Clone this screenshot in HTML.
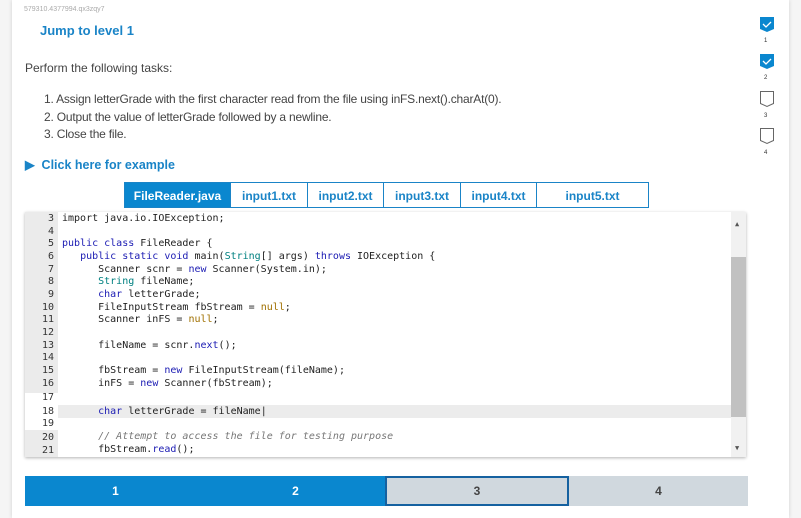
<!DOCTYPE html>
<html><head><style>
body{margin:0;width:801px;height:518px;background:#f5f5f5;font-family:"Liberation Sans",sans-serif;position:relative;overflow:hidden}
.card{position:absolute;left:12px;top:0;width:777px;height:518px;background:#fff;box-shadow:0 0 4px rgba(0,0,0,.15)}
.a{position:absolute}
.blue{color:#1a84c7;font-weight:bold}
.code{position:absolute;left:25px;top:212px;width:721px;height:245px;background:#fff;box-shadow:0 1px 3px rgba(0,0,0,.3);overflow:hidden;font-family:"DejaVu Sans Mono","Liberation Mono",monospace;font-size:10px}
.gut{position:absolute;left:0;top:0;width:33px;height:245px;background:#ebebeb}
.ln{position:absolute;left:0;width:29px;text-align:right;color:#333}
.cl{position:absolute;left:37px;white-space:pre;color:#222}
.k{color:#1b1bb3}.t{color:#008080}.n{color:#a07000}.c{color:#777;font-style:italic}
.tab{position:absolute;top:182px;height:26px;line-height:26px;font-size:12px;font-weight:bold;color:#1a84c7;text-align:center;border:1px solid #1a84c7;box-sizing:border-box;background:#fff}
.btn{position:absolute;top:476px;height:30px;line-height:30px;text-align:center;font-weight:bold;font-size:12px}
.num{position:absolute;left:764px;font-size:6px;color:#333}
</style></head><body>
<div class="card"></div>
<div class="a" style="left:24px;top:6px;font-size:7px;color:#aaa">579310.4377994.qx3zqy7</div>
<div class="a blue" style="left:40px;top:23px;font-size:13px">Jump to level 1</div>
<div class="a" style="left:25px;top:61px;font-size:12px;color:#444">Perform the following tasks:</div>
<div class="a" style="left:44px;top:91px;font-size:12px;color:#444;line-height:17.5px;letter-spacing:-0.2px">1. Assign letterGrade with the first character read from the file using inFS.next().charAt(0).<br>2. Output the value of letterGrade followed by a newline.<br>3. Close the file.</div>
<div class="a blue" style="left:25px;top:157px;font-size:12.5px">▶&nbsp; Click here for example</div>
<div class="tab" style="left:124px;width:107px;background:#0a87cf;color:#fff">FileReader.java</div>
<div class="tab" style="left:230px;width:78px">input1.txt</div>
<div class="tab" style="left:307px;width:77px">input2.txt</div>
<div class="tab" style="left:383px;width:78px">input3.txt</div>
<div class="tab" style="left:460px;width:77px">input4.txt</div>
<div class="tab" style="left:536px;width:113px">input5.txt</div>
<div class="code">
<div class="gut"></div>
<div class="a" style="left:0;top:181px;width:33px;height:37px;background:#fff"></div>
<div class="a" style="left:33px;top:193px;width:673px;height:13px;background:#ececec"></div>
<div class="a" style="left:706px;top:0;width:15px;height:245px;background:#f1f1f1"></div>
<div class="a" style="left:706px;top:45px;width:15px;height:160px;background:#c1c1c1"></div>
<div class="a" style="left:710px;top:8px;font-size:7px;color:#555">▲</div>
<div class="a" style="left:710px;top:232px;font-size:7px;color:#555">▼</div>
<div class="ln" style="top:1px">3</div><div class="cl" style="top:1px">import java.io.IOException;</div>
<div class="ln" style="top:14px">4</div>
<div class="ln" style="top:26px">5</div><div class="cl" style="top:26px"><span class="k">public class</span> FileReader {</div>
<div class="ln" style="top:39px">6</div><div class="cl" style="top:39px">   <span class="k">public static void</span> main(<span class="t">String</span>[] args) <span class="k">throws</span> IOException {</div>
<div class="ln" style="top:52px">7</div><div class="cl" style="top:52px">      Scanner scnr = <span class="k">new</span> Scanner(System.in);</div>
<div class="ln" style="top:64px">8</div><div class="cl" style="top:64px">      <span class="t">String</span> fileName;</div>
<div class="ln" style="top:77px">9</div><div class="cl" style="top:77px">      <span class="k">char</span> letterGrade;</div>
<div class="ln" style="top:90px">10</div><div class="cl" style="top:90px">      FileInputStream fbStream = <span class="n">null</span>;</div>
<div class="ln" style="top:102px">11</div><div class="cl" style="top:102px">      Scanner inFS = <span class="n">null</span>;</div>
<div class="ln" style="top:115px">12</div>
<div class="ln" style="top:128px">13</div><div class="cl" style="top:128px">      fileName = scnr.<span class="k">next</span>();</div>
<div class="ln" style="top:140px">14</div>
<div class="ln" style="top:153px">15</div><div class="cl" style="top:153px">      fbStream = <span class="k">new</span> FileInputStream(fileName);</div>
<div class="ln" style="top:166px">16</div><div class="cl" style="top:166px">      inFS = <span class="k">new</span> Scanner(fbStream);</div>
<div class="ln" style="top:180px">17</div>
<div class="ln" style="top:194px">18</div><div class="cl" style="top:194px">      <span class="k">char</span> letterGrade = fileName|</div>
<div class="ln" style="top:206px">19</div>
<div class="ln" style="top:220px">20</div><div class="cl c" style="top:219px">      // Attempt to access the file for testing purpose</div>
<div class="ln" style="top:233px">21</div><div class="cl" style="top:232px">      fbStream.<span class="k">read</span>();</div>
</div>
<div class="btn" style="left:25px;width:181px;background:#0a87cf;color:#fff">1</div>
<div class="btn" style="left:206px;width:179px;background:#0a87cf;color:#fff">2</div>
<div class="btn" style="left:385px;width:184px;background:#d0d8de;color:#444;border:2px solid #1561a0;box-sizing:border-box;line-height:26px">3</div>
<div class="btn" style="left:569px;width:179px;background:#d0d8de;color:#444">4</div>
<svg class="a" style="left:0;top:0" width="801" height="170">
<path d="M760 17h14v12l-7 3l-7-3z" fill="#0a87cf"/><path d="M763 24l3 3l5-5" stroke="#fff" fill="none" stroke-width="1.3"/>
<path d="M760 54h14v12l-7 3l-7-3z" fill="#0a87cf"/><path d="M763 61l3 3l5-5" stroke="#fff" fill="none" stroke-width="1.3"/>
<path d="M760.5 91.5h13v12l-6.5 3l-6.5-3z" fill="#fff" stroke="#666"/>
<path d="M760.5 128.5h13v12l-6.5 3l-6.5-3z" fill="#fff" stroke="#666"/>
</svg>
<div class="num" style="top:38px">1</div>
<div class="num" style="top:75px">2</div>
<div class="num" style="top:113px">3</div>
<div class="num" style="top:150px">4</div>
</body></html>
